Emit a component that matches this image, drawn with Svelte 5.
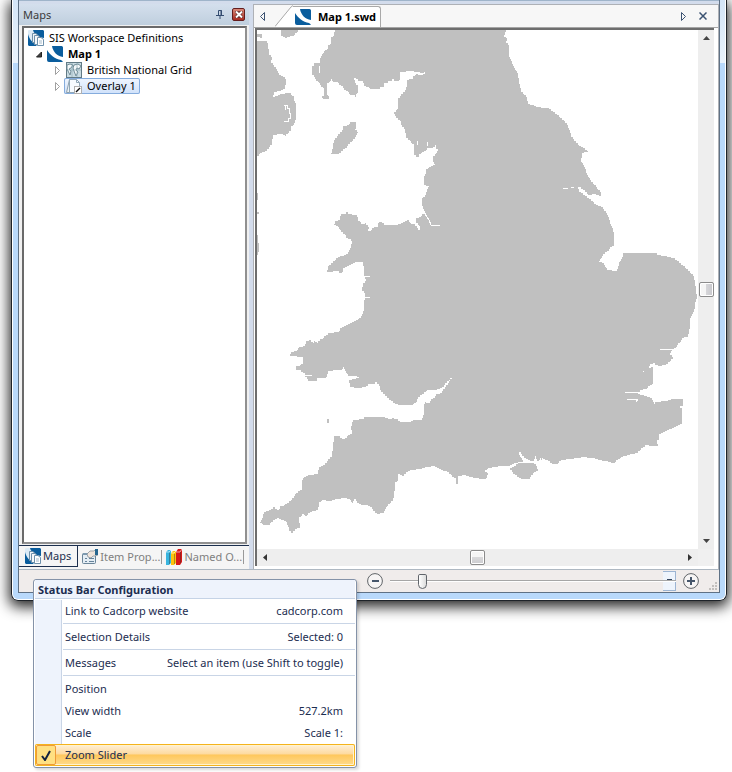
<script>
  let zoom = $state(10);
  let selected = $state('Overlay 1');
  let activeTab = $state('Maps');

  const tree = [
    { label: 'SIS Workspace Definitions', icon: 'pages', level: 0 },
    { label: 'Map 1', icon: 'swoosh', level: 1, bold: true, open: true },
    { label: 'British National Grid', icon: 'grid', level: 2 },
    { label: 'Overlay 1', icon: 'overlay', level: 2 },
  ];

  const tabs = [
    { id: 'Maps', label: 'Maps', icon: 'pages' },
    { id: 'Item', label: 'Item Prop...', icon: 'props' },
    { id: 'Named', label: 'Named O...', icon: 'books' },
  ];

  const groups = [
    [{ label: 'Link to Cadcorp website', value: 'cadcorp.com' }],
    [{ label: 'Selection Details', value: 'Selected: 0' }],
    [{ label: 'Messages', value: 'Select an item (use Shift to toggle)' }],
    [
      { label: 'Position', value: '' },
      { label: 'View width', value: '527.2km' },
      { label: 'Scale', value: 'Scale 1:' },
      { label: 'Zoom Slider', value: '', checked: true },
    ],
  ];

  // coastlines, clockwise or not, in map units
  const land = [
    '335,30 334,36 331,38 331,44 328,46 328,49 325,51 322,56 320,60 320,63 314,63 314,66 312,67 312,75 314,77 316,81 319,83 321,87 324,89 324,96 321,96 323,99 329,99 329,96 327,93 327,83 330,81 331,79 333,82 336,82 341,86 344,90 348,92 350,95 353,95 355,97 356,94 358,91 358,85 356,83 354,78 357,79 358,81 363,81 364,86 367,87 370,89 378,89 380,87 383,87 384,83 386,83 388,81 391,81 392,79 394,81 398,81 400,78 400,72 404,72 406,71 413,71 414,73 420,73 424,72 425,74 421,75 418,74 413,77 413,79 407,80 407,85 405,92 401,96 398,100 398,107 397,110 394,114 396,118 400,121 402,127 405,131 406,138 410,141 412,144 414,144 414,155 416,157 418,157 419,154 424,151 427,148 431,148 435,145 436,149 438,151 436,154 433,157 433,162 435,165 431,167 426,170 426,174 424,178 424,185 429,187 427,190 426,195 422,200 422,206 424,211 426,214 423,214 421,217 416,219 416,223 419,226 420,230 415,224 411,223 409,220 403,223 398,225 386,225 384,223 379,221 378,227 372,228 371,231 366,230 369,227 366,223 363,224 361,226 361,222 358,219 357,215 350,214 348,212 346,214 341,214 340,220 335,222 334,225 338,227 341,232 345,235 346,238 350,239 352,242 351,248 348,254 338,258 333,263 329,266 327,272 337,271 339,273 342,272 343,268 349,265 355,262 362,262 364,268 364,276 366,281 363,285 362,291 365,294 364,307 363,314 361,318 354,322 346,326 340,329 339,332 330,333 326,336 324,338 321,339 318,343 315,341 314,343 311,340 307,341 305,346 299,348 297,351 292,352 290,356 303,357 303,364 296,367 296,370 299,370 301,372 305,373 305,377 308,381 316,381 317,378 324,378 327,376 328,371 337,370 341,370 343,367 345,371 348,376 355,376 359,378 354,379 349,381 350,387 356,388 364,387 368,384 373,384 375,382 379,386 381,392 387,398 393,403 398,405 411,405 416,402 418,397 424,392 427,390 435,390 442,387 447,381 452,377 460,370 453,377 449,383 442,393 438,394 431,401 430,403 426,402 424,405 424,413 422,420 415,420 411,422 402,422 398,419 394,418 390,419 385,417 366,417 364,419 353,420 352,424 351,430 352,434 348,436 345,439 342,438 340,436 334,436 333,447 332,457 328,461 325,465 319,468 318,474 310,475 304,478 302,482 302,490 296,494 294,498 287,504 280,507 279,510 275,507 271,510 264,512 262,520 260,523 263,525 268,525 273,520 277,518 286,522 288,527 289,531 291,533 295,529 300,527 299,517 302,514 305,516 308,513 318,509 319,502 322,500 330,501 335,499 345,498 350,500 352,503 354,499 357,503 361,505 366,505 370,507 373,511 377,514 382,513 385,509 388,504 393,500 394,492 392,492 395,489 395,482 398,479 398,474 402,476 406,472 410,470 420,469 425,467 433,466 439,469 447,472 456,480 456,484 458,484 458,476 462,475 471,477 475,478 482,479 486,478 488,473 485,470 488,468 492,467 500,466 508,466 512,464 518,462 523,462 523,458 519,452 524,458 530,461 534,461 535,456 537,461 540,458 541,460 544,455 543,459 548,461 552,464 556,464 561,460 570,459 583,457 591,458 604,461 613,463 618,459 623,456 630,454 637,453 641,448 645,445 652,446 658,446 657,440 659,440 659,434 667,430 674,427 682,423 682,408 680,406 683,405 683,399 675,399 666,401 657,402 655,404 652,398 647,396 642,395 638,392 640,390 645,389 650,385 653,383 653,367 649,368 644,372 641,372 648,369 650,364 653,363 655,365 660,366 666,364 673,357 670,353 672,349 676,347 682,338 688,336 690,325 690,318 693,312 695,307 695,302 697,297 696,290 695,282 694,276 688,269 681,263 675,258 667,256 657,255 657,253 624,253 622,259 619,264 617,271 608,270 604,263 599,261 603,254 614,244 614,232 611,224 608,215 603,207 598,205 589,198 579,190 578,187 566,189 557,189 573,187 579,187 585,192 588,195 594,194 601,196 601,192 597,187 591,180 587,173 584,165 581,160 582,153 588,151 585,148 579,145 576,141 571,135 569,128 567,123 562,118 555,112 549,108 537,107 534,105 528,104 527,97 521,90 519,82 518,73 514,66 509,55 509,45 506,41 507,38 504,35 506,30',
    '257,41 266,41 268,45 269,55 272,58 271,63 276,69 279,75 283,77 286,81 285,89 281,91 275,92 273,97 280,94 289,93 292,96 294,97 294,101 296,104 296,120 294,125 291,127 291,131 286,136 283,134 273,135 272,145 267,151 262,153 257,157',
    '350,122 356,122 356,127 355,130 358,133 355,139 350,144 343,151 339,154 329,154 332,151 333,143 335,138 338,134 342,130 343,126 347,125',
    '510,468 518,463 532,462 536,466 538,471 534,473 530,479 523,479 515,474',
    '281,30 281,36 285,38 290,36 294,35 298,30',
    '257,34 262,34 262,38 257,36',
    '327,419 329,419 329,423 327,423',
    '257,193 258,193 258,200 257,200',
    '257,212 259,212 259,214 257,214',
    '257,235 258,235 259,252 257,257',
  ];

  // narrow water inside the land
  const creeks = [
    'M284,105H287V108H289V113H290V118H288V121H284M285,106V110M319,66V73',
    'M413,72H420M417,141V145M427,142V146M425,214L429,220L431,225H440',
    'M660,349H672M625,392H641M627,399H638L636,402M303,375H312',
    'M364,276H370M364,297H370M519,453L523,460M523,462H548',
  ];

  // the raster coast is blocky: turn each slope into steps of about two units
  function stepped(points) {
    const pts = points.split(' ').map((p) => p.split(',').map(Number));
    let d = `M${pts[0][0]},${pts[0][1]}`;
    for (let i = 1; i <= pts.length; i++) {
      const [x0, y0] = pts[i - 1];
      const [x1, y1] = pts[i % pts.length];
      const n = Math.max(1, Math.round(Math.max(Math.abs(x1 - x0), Math.abs(y1 - y0)) / 2));
      for (let k = 1; k <= n; k++) {
        d += `H${Math.round(x0 + ((x1 - x0) * k) / n)}V${Math.round(y0 + ((y1 - y0) * k) / n)}`;
      }
    }
    return d + 'Z';
  }
</script>

{#snippet icon(name)}
  <svg class="icon" viewBox="0 0 16 16" width="16" height="16" aria-hidden="true">
    {#if name === 'swoosh'}
      <path d="M0 4C3 9 8 13 14 14L16 15.500L15 16H2A2 2 0 0 1 0 14Z" fill="#0a5d9d" />
      <path d="M5 0H14.500A1.500 1.500 0 0 1 16 1.500V11C10 10 6 6 5 0Z" fill="#0a5d9d" />
    {:else if name === 'pages'}
      <rect width="16" height="16" rx="1" fill="#dcebf6" />
      <path d="M0 4C1 9 5 13 9 16H1L0 15ZM5 0H15L16 1V8C10 7 6 4 5 0Z" fill="#0a5d9d" />
      <path d="M4.500 3.500H8L10 5.500V12.500H4.500Z" fill="#eef3f7" stroke="#6f91ab" />
      <path d="M6.500 5.500H10L12 7.500V14.500H6.500Z" fill="#f6f8fa" stroke="#6f91ab" />
      <path d="M9.500 7.500H13L15.500 9.500V15.500H9.500Z" fill="#fff" stroke="#6f91ab" />
      <path d="M11 11H14M11 13H14" stroke="#a5bac9" />
    {:else if name === 'grid'}
      <rect x=".5" y=".5" width="15" height="15" fill="#c9dbe2" stroke="#627b86" />
      <path d="M1 3L4 2L7 3L5 6L3 7L5 9L4 13L2 9L1 7ZM8 3L12 2L15 4L13 7L11 6L10 8L12 10L10 14L8 9L7 6Z" fill="#f4f8fa" stroke="#718d98" />
      <path d="M1 8H15M6 1V15M11 1V15" stroke="#8ca7b1" stroke-width=".6" />
    {:else if name === 'overlay'}
      <path d="M.5 14.500L3.500 1.500H7L5 14.500Z" fill="#edf2f5" stroke="#8da0ad" />
      <path d="M3.500 14.500V1.500H10.500L13.500 4.500V14.500Z" fill="#f7fbff" stroke="#91a8b8" />
      <path d="M10.500 1.500V4.500H13.500" fill="none" stroke="#91a8b8" />
      <rect x="8.500" y="8.500" width="7" height="7" fill="#fff" stroke="#b0b0b0" />
      <path d="M10 14L14 10" stroke="#111" stroke-width="1.500" />
    {:else if name === 'props'}
      <rect x=".5" y="4.500" width="13" height="10" rx="1" fill="#e4edf4" stroke="#6b8599" />
      <path d="M1 4H14V6H1Z" fill="#7d9ab0" />
      <path d="M3 9.500H5M7 9.500H12M3 12.500H5M7 12.500H12" stroke="#66839a" />
      <path d="M5 5L8 2H12L13 1H16V6L13 7H11L9 9L6 8Z" fill="#f0e5dc" stroke="#7b8790" stroke-width=".7" />
      <path d="M13 0H16V6H13Z" fill="#27668f" />
    {:else}
      <path d="M0 3L2 1H5V14L3 16H0Z" fill="#39b5df" />
      <path d="M5 4L7 2H10V14L8 16H5Z" fill="#ffc20a" />
      <path d="M10 3L12 0H16V13L14 16H10Z" fill="#d91818" />
      <path d="M3.500 4V15M8.500 5V15M14.500 3V14" stroke="#333" stroke-opacity=".4" />
      <path d="M0 3H3L5 1M5 4H8L10 2M10 3H14L16 0" fill="none" stroke="#fff" stroke-opacity=".6" />
    {/if}
  </svg>
{/snippet}

<div class="desktop">
  <main class="window">
    <div class="client">
      <div class="workspace">
        <section class="dock">
          <header class="dock-title">
            <span>Maps</span>
            <button class="pin" aria-label="Auto hide">
              <svg viewBox="0 0 8 9" width="8" height="9"><path d="M2.500 5V.5H5.500V5M5 0V5M0 5.500H8M4 5.500V9" fill="none" stroke="#344c70" /></svg>
            </button>
            <button class="close" aria-label="Close panel">
              <svg viewBox="0 0 8 7" width="8" height="7"><path d="M1 0L7 7M7 0L1 7" stroke="#5b2929" stroke-width="3.500" /><path d="M1 .5L7 6.500M7 .5L1 6.500" stroke="#fff" stroke-width="2" /></svg>
            </button>
          </header>
          <div class="tree" role="tree">
            {#each tree as node}
              <div class="node level-{node.level}">
                {#if node.level > 0}
                  <svg class="expander" viewBox="0 0 7 9" width="7" height="9" aria-hidden="true">
                    {#if node.open}
                      <path d="M5.500 2V7H.5Z" fill="#404040" stroke="#222" />
                    {:else}
                      <path d="M.5 .5V8.500L4.500 4.500Z" fill="#fff" stroke="#a0a0a0" />
                    {/if}
                  </svg>
                {/if}
                <button
                  class="node-btn"
                  class:bold={node.bold}
                  class:selected={selected === node.label}
                  role="treeitem"
                  aria-selected={selected === node.label}
                  onclick={() => (selected = node.label)}
                >
                  {@render icon(node.icon)}
                  <span>{node.label}</span>
                </button>
              </div>
            {/each}
          </div>
          <div class="dock-tabs" role="tablist">
            {#each tabs as tab}
              <button
                class="dock-tab"
                class:active={activeTab === tab.id}
                role="tab"
                aria-selected={activeTab === tab.id}
                onclick={() => (activeTab = tab.id)}
              >
                {@render icon(tab.icon)}
                <span>{tab.label}</span>
              </button>
            {/each}
          </div>
        </section>

        <section class="document">
          <div class="doc-tabs">
            <button class="nav" aria-label="Previous tab">
              <svg viewBox="0 0 5 9" width="5" height="9"><path d="M4.500 .5V8.500L.5 4.500Z" fill="none" stroke="#3c5372" /></svg>
            </button>
            <svg class="slant" viewBox="0 0 18 22" width="18" height="22" aria-hidden="true"><path d="M0 22L17 1L18 0V22Z" fill="#fff" /><path d="M0 21.500L16 2L18 .5" fill="none" stroke="#a9a9a9" /></svg>
            <button class="doc-tab">
              {@render icon('swoosh')}
              <span>Map 1.swd</span>
            </button>
            <span class="fill"></span>
            <button class="nav" aria-label="Next tab">
              <svg viewBox="0 0 5 9" width="5" height="9"><path d="M.5 .5V8.500L4.500 4.500Z" fill="none" stroke="#3c5372" /></svg>
            </button>
            <button class="nav" aria-label="Close document">
              <svg viewBox="0 0 8 8" width="8" height="8"><path d="M.5 .5L7.500 7.500M7.500 .5L.5 7.500" stroke="#3c5372" stroke-width="1.500" /></svg>
            </button>
          </div>
          <div class="view">
            <svg class="map" viewBox="257 30 441 517" preserveAspectRatio="xMinYMin meet" role="img" aria-label="Map of England and Wales">
              {#each land as points}
                <path class="land" d={stepped(points)} />
              {/each}
              {#each creeks as d}
                <path class="creek" {d} />
              {/each}
            </svg>
            <div class="scroll vertical">
              <button aria-label="Scroll up"><svg viewBox="0 0 7 4" width="7" height="4"><path d="M0 4L3.500 0L7 4Z" fill="#444" /></svg></button>
              <span class="thumb"></span>
              <button aria-label="Scroll down"><svg viewBox="0 0 7 4" width="7" height="4"><path d="M0 0L3.500 4L7 0Z" fill="#444" /></svg></button>
            </div>
            <div class="scroll horizontal">
              <button aria-label="Scroll left"><svg viewBox="0 0 4 7" width="4" height="7"><path d="M4 0L0 3.500L4 7Z" fill="#333" /></svg></button>
              <span class="thumb"></span>
              <button aria-label="Scroll right"><svg viewBox="0 0 4 7" width="4" height="7"><path d="M0 0L4 3.500L0 7Z" fill="#333" /></svg></button>
            </div>
            <div class="corner"></div>
          </div>
        </section>
      </div>

      <footer class="status">
        <button class="round" aria-label="Zoom out" onclick={() => (zoom = Math.max(0, zoom - 5))}>
          <svg viewBox="0 0 16 16" width="16" height="16"><circle cx="8" cy="8" r="7.400" fill="#f7f5f5" stroke="#606468" /><path d="M5 8H12" stroke="#46566b" stroke-width="2" /></svg>
        </button>
        <div class="zoom">
          <input type="range" min="0" max="100" bind:value={zoom} aria-label="Zoom" />
          <span class="stop"></span>
        </div>
        <button class="round" aria-label="Zoom in" onclick={() => (zoom = Math.min(100, zoom + 5))}>
          <svg viewBox="0 0 16 16" width="16" height="16"><circle cx="8" cy="8" r="7.400" fill="#f7f5f5" stroke="#606468" /><path d="M4 8H12M8 4V12" stroke="#46566b" stroke-width="2" /></svg>
        </button>
        <svg class="grip" viewBox="0 0 8 8" width="8" height="8" aria-hidden="true"><path d="M6 0H8V2H6ZM3 3H5V5H3ZM6 3H8V5H6ZM0 6H2V8H0ZM3 6H5V8H3ZM6 6H8V8H6Z" fill="#c2bfbd" /></svg>
      </footer>
    </div>
  </main>

  <div class="menu" role="menu" aria-label="Status Bar Configuration">
    <div class="menu-title">Status Bar Configuration</div>
    <div class="menu-body">
      {#each groups as items, i}
        {#if i > 0}
          <div class="separator"></div>
        {/if}
        {#each items as item}
          <button class="item" class:checked={item.checked} role="menuitemcheckbox" aria-checked={!!item.checked}>
            <span class="tick">
              {#if item.checked}
                <svg viewBox="0 0 10 11" width="10" height="11"><path d="M1 6L4 10L9 1" fill="none" stroke="#13233f" stroke-width="2" /></svg>
              {/if}
            </span>
            <span class="label">{item.label}</span>
            <span class="value">{item.value}</span>
          </button>
        {/each}
      {/each}
    </div>
  </div>
</div>

<style>
  :global(body) {
    margin: 0;
    background: #fff;
  }

  .desktop {
    position: relative;
    box-sizing: border-box;
    height: 100vh;
    padding: 0 5px 171px 11px;
    overflow: hidden;
    font-family: 'Noto Sans', 'Open Sans', sans-serif;
    font-size: 11px;
    line-height: 16px;
    color: #000;
  }

  button {
    display: flex;
    align-items: center;
    margin: 0;
    padding: 0;
    border: 0;
    background: none;
    font: inherit;
    color: inherit;
    white-space: nowrap;
  }

  svg {
    display: block;
    flex: none;
  }

  .window {
    box-sizing: border-box;
    height: 100%;
    padding: 0 6px 7px;
    border: 1px solid #1e2329;
    border-top: 0;
    border-radius: 0 0 7px 7px;
    background: linear-gradient(#d4e5f7, #eaf3fc 63px, #b9d9fb 63px);
    box-shadow: inset 0 -1px #fff, inset 1px 0 #fff, inset -1px 0 #fff, 0 4px 14px 2px rgba(0, 0, 0, 0.85);
  }

  .client {
    display: flex;
    flex-direction: column;
    box-sizing: border-box;
    height: 100%;
    border: 1px solid #5f7185;
    border-top: 0;
    background: #d3dcec;
  }

  .workspace {
    display: flex;
    gap: 4px;
    flex: 1;
    min-height: 0;
    padding-top: 3px;
    border-top: 1px solid #9fb4ca;
    border-bottom: 1px solid #aeb8c2;
  }

  .dock {
    display: flex;
    flex-direction: column;
    width: 230px;
    background: #f0f0f0;
  }

  .dock-title {
    display: flex;
    align-items: center;
    gap: 8px;
    height: 21px;
    padding: 0 4px;
    background: linear-gradient(#d4dfed, #bfcfde);
    color: #3b3b3b;
  }

  .dock-title span {
    flex: 1;
  }

  .close {
    justify-content: center;
    width: 13px;
    height: 13px;
    border: 1px solid #641d1d;
    border-radius: 2px;
    background: linear-gradient(#d98878, #a82a20);
  }

  .tree {
    flex: 1;
    margin: 1px 2px 1px 3px;
    padding: 2px 3px;
    border: 2px solid #6a6a6a;
    border-right-color: #909090;
    border-bottom-color: #909090;
    background: #fff;
  }

  .node {
    display: flex;
    align-items: center;
    gap: 2px;
    height: 16px;
  }

  .level-1 {
    padding-left: 9px;
  }

  .level-2 {
    padding-left: 28px;
  }

  .node-btn {
    gap: 5px;
    height: 16px;
    padding: 0 4px 0 1px;
    border-radius: 2px;
  }

  .level-1 .node-btn,
  .level-2 .node-btn {
    padding-left: 2px;
  }

  .bold {
    font-weight: 700;
  }

  .selected {
    background: linear-gradient(#f0f6fe, #cfe1fa);
    box-shadow: inset 0 0 0 1px #85acdd;
  }

  .dock-tabs {
    display: flex;
    height: 23px;
    border-top: 1px solid #1c2f4e;
    background: #f5f5f5;
    color: #808080;
  }

  .dock-tab {
    gap: 2px;
    height: 21px;
    padding: 0 2px 0 4px;
    position: relative;
  }

  .dock-tab:not(.active)::after {
    content: '';
    position: absolute;
    top: 4px;
    right: 0;
    width: 1px;
    height: 14px;
    background: #999;
  }

  .dock-tab.active {
    padding: 0 6px;
    border-right: 1px solid #1c2f4e;
    border-bottom: 1px solid #1c2f4e;
    color: #1c2f4e;
  }

  .document {
    display: flex;
    flex-direction: column;
    flex: 1;
    min-width: 0;
    border: 1px solid #aeb1b6;
    border-bottom: 0;
    background: #fff;
  }

  .doc-tabs {
    display: flex;
    align-items: center;
    height: 22px;
    padding: 0 11px 0 4px;
    border-bottom: 1px solid #a5a5a5;
    background: #f7f7f7;
  }

  .nav {
    justify-content: center;
    width: 9px;
    height: 20px;
    margin-right: 10px;
  }

  .slant {
    margin-left: -2px;
  }

  .doc-tab {
    gap: 7px;
    height: 21px;
    margin-top: 1px;
    padding: 0 4px 1px 2px;
    border: 1px solid #a9a9a9;
    border-left: 0;
    border-bottom: 0;
    border-radius: 0 3px 0 0;
    background: #fff;
    font-weight: 700;
    box-sizing: border-box;
  }

  .fill {
    flex: 1;
  }

  .nav:last-child {
    margin-right: 0;
  }

  .view {
    display: grid;
    grid-template-columns: 1fr 16px;
    grid-template-rows: 1fr 17px;
    flex: 1;
    min-height: 0;
    margin: 0 4px 3px 1px;
    border: 2px solid #6e6e6e;
    border-right: 0;
    border-bottom: 0;
  }

  .map {
    width: 100%;
    height: 100%;
    min-height: 0;
    background: #fff;
    shape-rendering: crispEdges;
  }

  .land {
    fill: #c0c0c0;
  }

  .creek {
    fill: none;
    stroke: #fff;
  }

  .scroll {
    display: flex;
    align-items: center;
    justify-content: space-between;
    background: #eee;
  }

  .scroll button {
    justify-content: center;
    width: 16px;
    height: 16px;
  }

  .vertical {
    flex-direction: column;
    min-height: 0;
  }

  .thumb {
    box-sizing: border-box;
    width: 15px;
    height: 15px;
    border: 1px solid #8b8b8b;
    border-radius: 2px;
    background: linear-gradient(90deg, #f5f5f5 45%, #d5d5d8 50%, #c8c8cd);
    box-shadow: inset 0 0 0 1px #fff;
  }

  .horizontal .thumb {
    background: linear-gradient(#f5f5f5 45%, #d8d8da 50%, #cdcdd0);
  }

  .corner {
    background: #f0f0f0;
  }

  .status {
    display: flex;
    align-items: center;
    justify-content: flex-end;
    height: 22px;
    padding-right: 2px;
    background: #f0eceb;
  }

  .zoom {
    display: flex;
    align-items: center;
    position: relative;
    width: 286px;
    height: 20px;
    margin: 0 7px;
  }

  .zoom input {
    appearance: none;
    position: relative;
    width: 100%;
    height: 16px;
    margin: 0;
    background: linear-gradient(#a6a6a6, #a6a6a6) 0 7px / 100% 1px no-repeat, linear-gradient(#fff, #fff) 0 8px / 100% 1px no-repeat;
    z-index: 1;
  }

  .zoom input::-webkit-slider-thumb {
    appearance: none;
    box-sizing: border-box;
    width: 9px;
    height: 15px;
    border: 1px solid #60646a;
    border-radius: 2px 2px 5px 5px;
    background: linear-gradient(90deg, #fff, #dcdcdc);
  }

  .stop {
    position: absolute;
    right: 0;
    top: 0;
    width: 13px;
    height: 20px;
    border: 1px solid #9db5d3;
    border-left: 0;
    background: linear-gradient(#34465f, #34465f) 4px 7px / 5px 1px no-repeat #eef4fc;
    box-sizing: border-box;
  }

  .grip {
    align-self: flex-end;
    margin: 0 0 2px 10px;
  }

  .menu {
    position: absolute;
    left: 33px;
    top: calc(100vh - 193px);
    box-sizing: border-box;
    width: 324px;
    padding: 0 1px 1px;
    border: 1px solid #8492a8;
    border-radius: 3px;
    background: #fff;
    box-shadow: 2px 2px 3px rgba(0, 0, 0, 0.15);
    color: #1c2d50;
  }

  .menu-title {
    height: 18px;
    margin-bottom: 1px;
    padding: 0 3px;
    border-bottom: 1px solid #c5d3e6;
    background: #eef3fc;
    font-weight: 700;
    line-height: 20px;
  }

  .menu-body {
    background: linear-gradient(90deg, #eef3fc 26px, #c9d5e6 26px, #c9d5e6 27px, #fff 27px);
  }

  .separator {
    height: 1px;
    margin: 1px 0 2px 28px;
    background: #c9d5e6;
  }

  .item {
    box-sizing: border-box;
    width: 100%;
    height: 22px;
    padding: 0 12px 0 1px;
  }

  .tick {
    display: flex;
    align-items: center;
    justify-content: center;
    box-sizing: border-box;
    width: 20px;
    height: 20px;
    margin-right: 9px;
  }

  .value {
    margin-left: auto;
  }

  .checked {
    border-radius: 2px;
    background: linear-gradient(#fef1dc, #fddaa0 45%, #fec75c 50%, #fedc91);
    box-shadow: inset 0 0 0 1px #f5b31c, inset 0 0 0 2px #fff3cf;
  }

  .checked .tick {
    border: 1px solid #ee9a3a;
    border-radius: 2px;
    background: #ffe082;
  }
</style>
